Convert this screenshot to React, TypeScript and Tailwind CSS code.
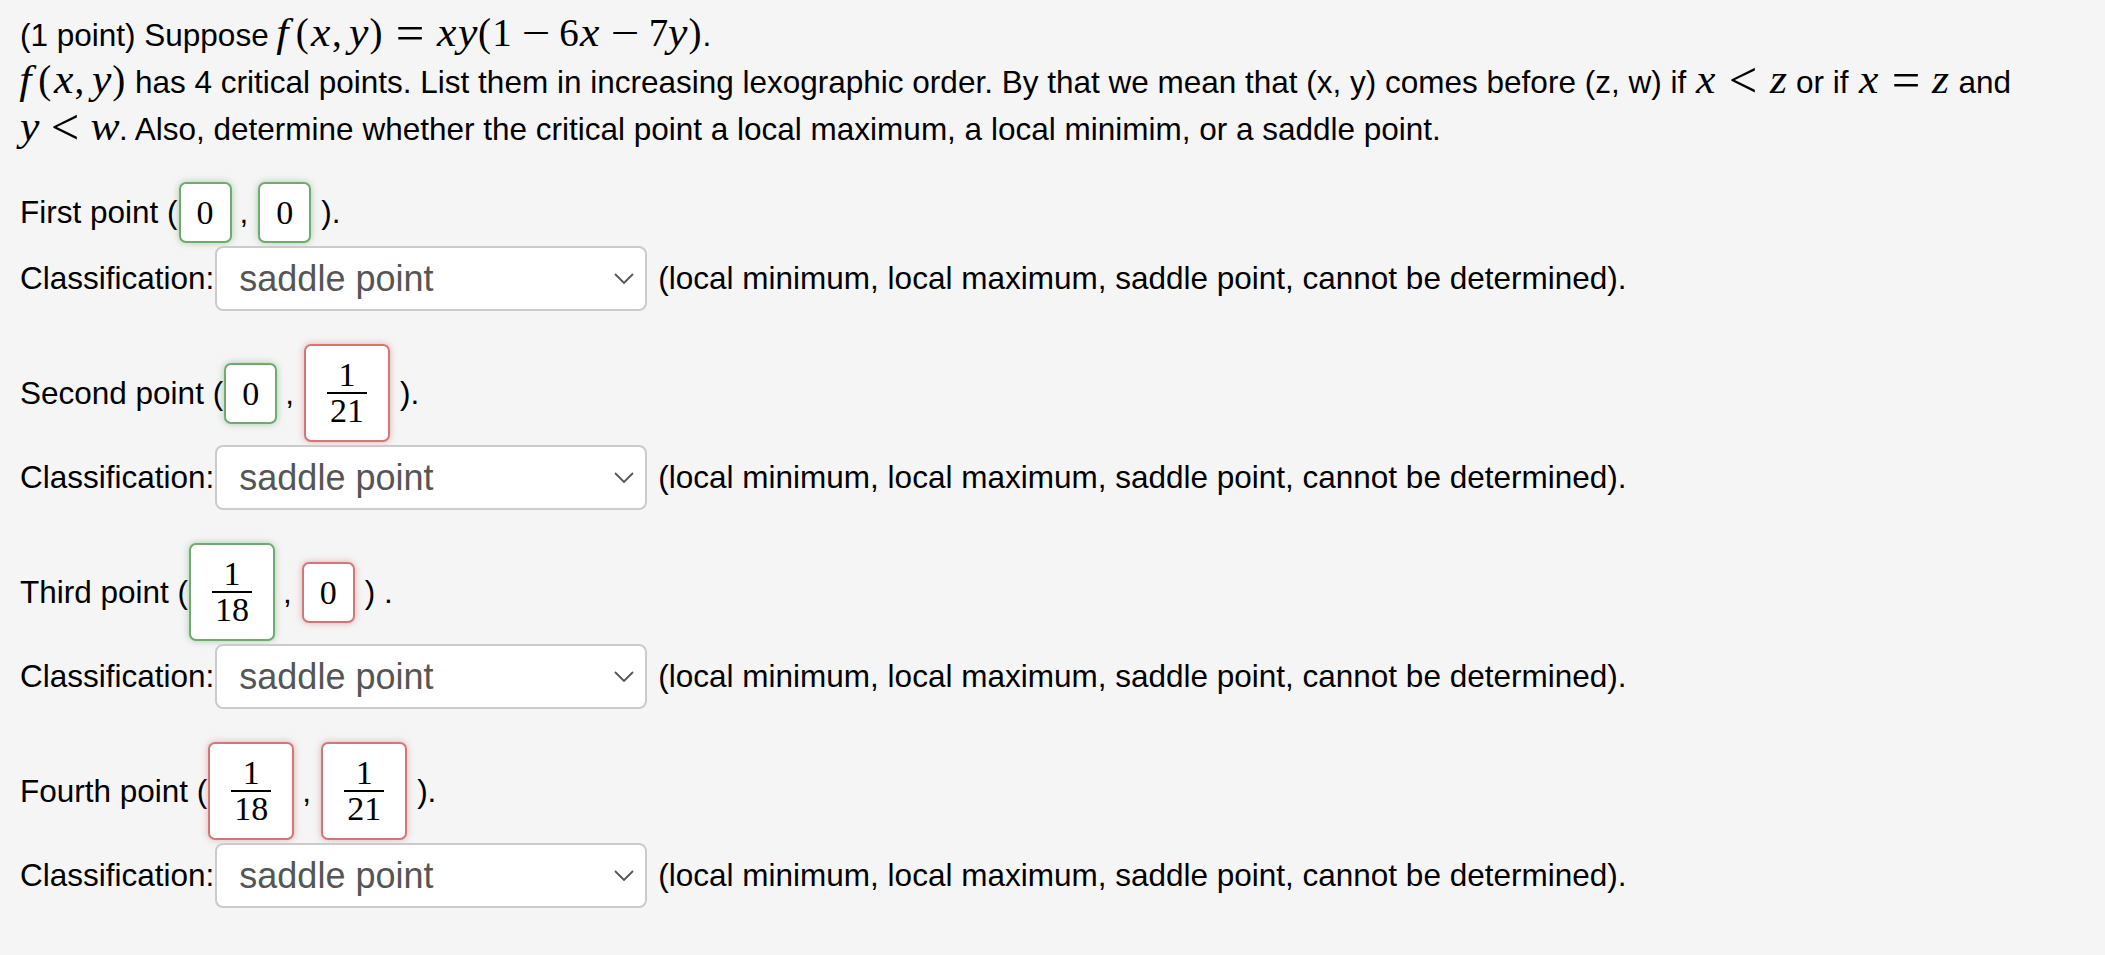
import type { ReactNode } from "react";

type Tone = "ok" | "bad";

const serif = "font-['Liberation_Serif','DejaVu_Serif',serif]";

// widths follow the TeX math font so the formulas take the same room
const letterW: Record<string, string> = {
  f: "w-[0.44em] text-left",
  x: "w-[0.572em] text-center",
  y: "w-[0.49em] text-center",
  z: "w-[0.465em] text-center",
  w: "w-[0.716em] text-center",
};

function M({ children }: { children: ReactNode }) {
  return <span className={`${serif} text-[39px] leading-none whitespace-nowrap`}>{children}</span>;
}

function V({ c }: { c: string }) {
  return (
    <i className={`inline-block ${letterW[c]}`}>
      <span className="inline-block scale-x-[1.12]">{c}</span>
    </i>
  );
}

function P({ c }: { c: string }) {
  return <span className="inline-block w-[0.389em] text-center">{c}</span>;
}

function Rel({ c }: { c: string }) {
  return (
    <span className="mx-[0.278em] inline-block w-[0.778em] text-center">
      <span className="inline-block scale-[1.3]">{c}</span>
    </span>
  );
}

function Bin({ c }: { c: string }) {
  return (
    <span className="mx-[0.222em] inline-block w-[0.778em] text-center">
      <span className="inline-block scale-x-[1.3]">{c}</span>
    </span>
  );
}

function Comma() {
  return <span className="mr-[0.167em] inline-block w-[0.278em]">,</span>;
}

function Fxy() {
  return (
    <>
      <V c="f" />
      <P c="(" />
      <V c="x" />
      <Comma />
      <V c="y" />
      <P c=")" />
    </>
  );
}

function Frac({ num, den }: { num: string; den: string }) {
  return (
    <span className={`${serif} flex flex-col items-center text-[34px] leading-[30px]`}>
      <span>{num}</span>
      <span className="my-[2px] h-[2px] w-[40px] bg-black" />
      <span>{den}</span>
    </span>
  );
}

function Box({ tone, children, wide }: { tone: Tone; children: ReactNode; wide?: boolean }) {
  const toneCls =
    tone === "ok"
      ? "border-[#6faa6f] shadow-[0_0_7px_rgba(111,170,111,0.55)]"
      : "border-[#d07878] shadow-[0_0_7px_rgba(208,120,120,0.55)]";
  const size = wide ? "w-[86px] h-[98px]" : "w-[53px] h-[61px]";
  return (
    <span
      className={`flex shrink-0 items-center justify-center rounded-[7px] border-2 bg-white ${size} ${toneCls} ${serif} text-[34px]`}
    >
      {children}
    </span>
  );
}

interface Point {
  label: string;
  x: ReactNode;
  y: ReactNode;
  tail: string;
}

function PointRow({ p, first }: { p: Point; first?: boolean }) {
  return (
    <div className={first ? "mt-[29px]" : "mt-[33px]"}>
      <div className="flex items-center whitespace-pre">
        <span className="mr-[1px]">{p.label} (</span>
        {p.x}
        <span className="ml-[8px] mr-[10px]">,</span>
        {p.y}
        <span className="ml-[10px]">{p.tail}</span>
      </div>
      <div className="mt-[3px] flex items-center whitespace-nowrap">
        <span className="mr-[1px]">Classification:</span>
        <div className="flex h-[65px] w-[432px] items-center justify-between rounded-[8px] border-2 border-[#cbcbcb] bg-white pl-[22px] pr-[11px] text-[36px] text-[#555555]">
          <span>saddle point</span>
          <svg width="20" height="11" viewBox="0 0 20 11" fill="none">
            <path d="M1 1 L10 10 L19 1" stroke="#555555" strokeWidth="1.8" />
          </svg>
        </div>
        <span className="ml-[11px]">(local minimum, local maximum, saddle point, cannot be determined).</span>
      </div>
    </div>
  );
}

export default function App() {
  const points: Point[] = [
    {
      label: "First point",
      x: <Box tone="ok">0</Box>,
      y: <Box tone="ok">0</Box>,
      tail: ").",
    },
    {
      label: "Second point",
      x: <Box tone="ok">0</Box>,
      y: (
        <Box tone="bad" wide>
          <Frac num="1" den="21" />
        </Box>
      ),
      tail: ").",
    },
    {
      label: "Third point",
      x: (
        <Box tone="ok" wide>
          <Frac num="1" den="18" />
        </Box>
      ),
      y: <Box tone="bad">0</Box>,
      tail: ") .",
    },
    {
      label: "Fourth point",
      x: (
        <Box tone="bad" wide>
          <Frac num="1" den="18" />
        </Box>
      ),
      y: (
        <Box tone="bad" wide>
          <Frac num="1" den="21" />
        </Box>
      ),
      tail: ").",
    },
  ];

  return (
    <div className="min-h-screen bg-[#f5f5f5] pl-[20px] pt-[12px] font-['Liberation_Sans',Arial,sans-serif] text-[31.5px] leading-[47px] text-black">
      <div className="whitespace-nowrap">
        (1 point) Suppose{" "}
        <M>
          <Fxy />
          <Rel c="=" />
          <V c="x" />
          <V c="y" />
          <P c="(" />1
          <Bin c="−" />6
          <V c="x" />
          <Bin c="−" />7
          <V c="y" />
          <P c=")" />
        </M>
        .
      </div>
      <div className="whitespace-nowrap">
        <M>
          <Fxy />
        </M>{" "}
        has 4 critical points. List them in increasing lexographic order. By that we mean that (x, y) comes before (z, w) if{" "}
        <M>
          <V c="x" />
          <Rel c="<" />
          <V c="z" />
        </M>{" "}
        or if{" "}
        <M>
          <V c="x" />
          <Rel c="=" />
          <V c="z" />
        </M>{" "}
        and
      </div>
      <div className="whitespace-nowrap">
        <M>
          <V c="y" />
          <Rel c="<" />
          <V c="w" />
        </M>
        . Also, determine whether the critical point a local maximum, a local minimim, or a saddle point.
      </div>
      {points.map((p, i) => (
        <PointRow key={p.label} p={p} first={i === 0} />
      ))}
    </div>
  );
}
